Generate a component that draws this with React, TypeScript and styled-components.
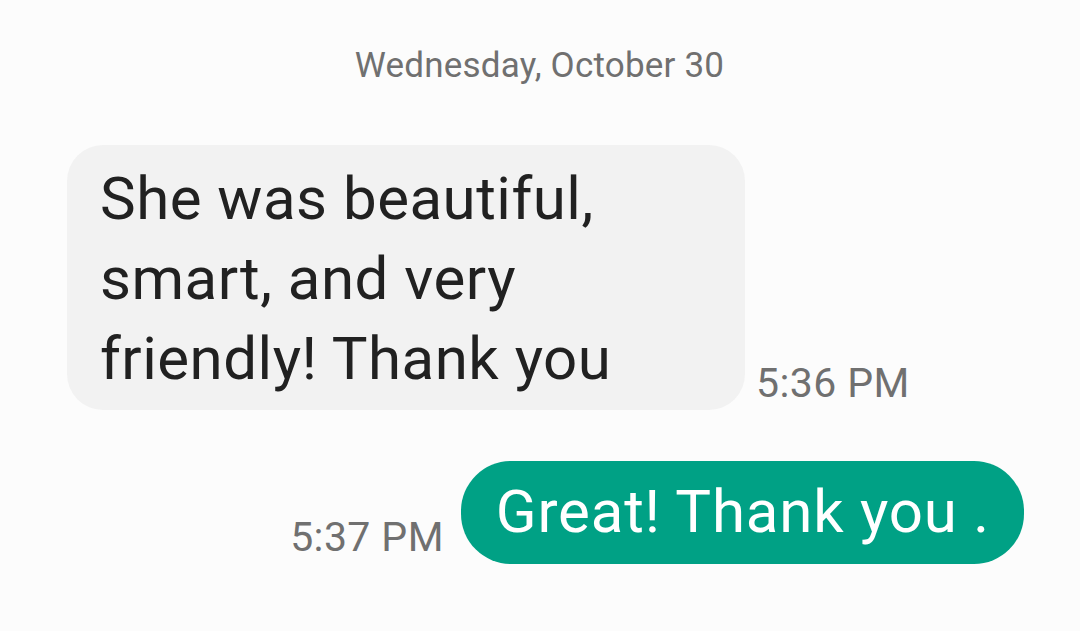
import styled, { createGlobalStyle } from "styled-components";

const GlobalStyle = createGlobalStyle`
  html, body {
    margin: 0;
    padding: 0;
    background: #fcfcfc;
  }
  body {
    font-family: Roboto, "Noto Sans", "Liberation Sans", sans-serif;
  }
`;

const Thread = styled.div`
  width: 1080px;
  height: 631px;
  box-sizing: border-box;
  padding: 44px 56px 0 67px;
  display: flex;
  flex-direction: column;
  background: #fcfcfc;
  overflow: hidden;
`;

const DateLabel = styled.div`
  align-self: center;
  margin-right: 12px;
  font-size: 35px;
  line-height: 44px;
  letter-spacing: 0.2px;
  color: #707070;
`;

const Row = styled.div<{ $out?: boolean }>`
  display: flex;
  align-items: flex-end;
  justify-content: ${(p) => (p.$out ? "flex-end" : "flex-start")};
  gap: ${(p) => (p.$out ? "17px" : "11px")};
  margin-top: ${(p) => (p.$out ? "51px" : "57px")};
`;

const Bubble = styled.div<{ $out?: boolean }>`
  box-sizing: border-box;
  max-width: 678px;
  padding: ${(p) => (p.$out ? "11px 34px 12px 35px" : "14px 33px 11px 33px")};
  border-radius: ${(p) => (p.$out ? "50px" : "36px")};
  background: ${(p) => (p.$out ? "#00a185" : "#f2f2f2")};
  color: ${(p) => (p.$out ? "#ffffff" : "#212121")};
  font-size: 60px;
  line-height: 80px;
  letter-spacing: ${(p) => (p.$out ? "0.8px" : "0.5px")};
`;

const Time = styled.div`
  margin-bottom: 5px;
  font-size: 41px;
  line-height: 44px;
  letter-spacing: 0.4px;
  color: #707070;
  white-space: nowrap;
`;

export default function App() {
  return (
    <>
      <GlobalStyle />
      <Thread>
        <DateLabel>Wednesday, October 30</DateLabel>
        <Row>
          <Bubble>She was beautiful, smart, and very friendly! Thank you</Bubble>
          <Time>5:36 PM</Time>
        </Row>
        <Row $out>
          <Time>5:37 PM</Time>
          <Bubble $out>Great! Thank you .</Bubble>
        </Row>
      </Thread>
    </>
  );
}
